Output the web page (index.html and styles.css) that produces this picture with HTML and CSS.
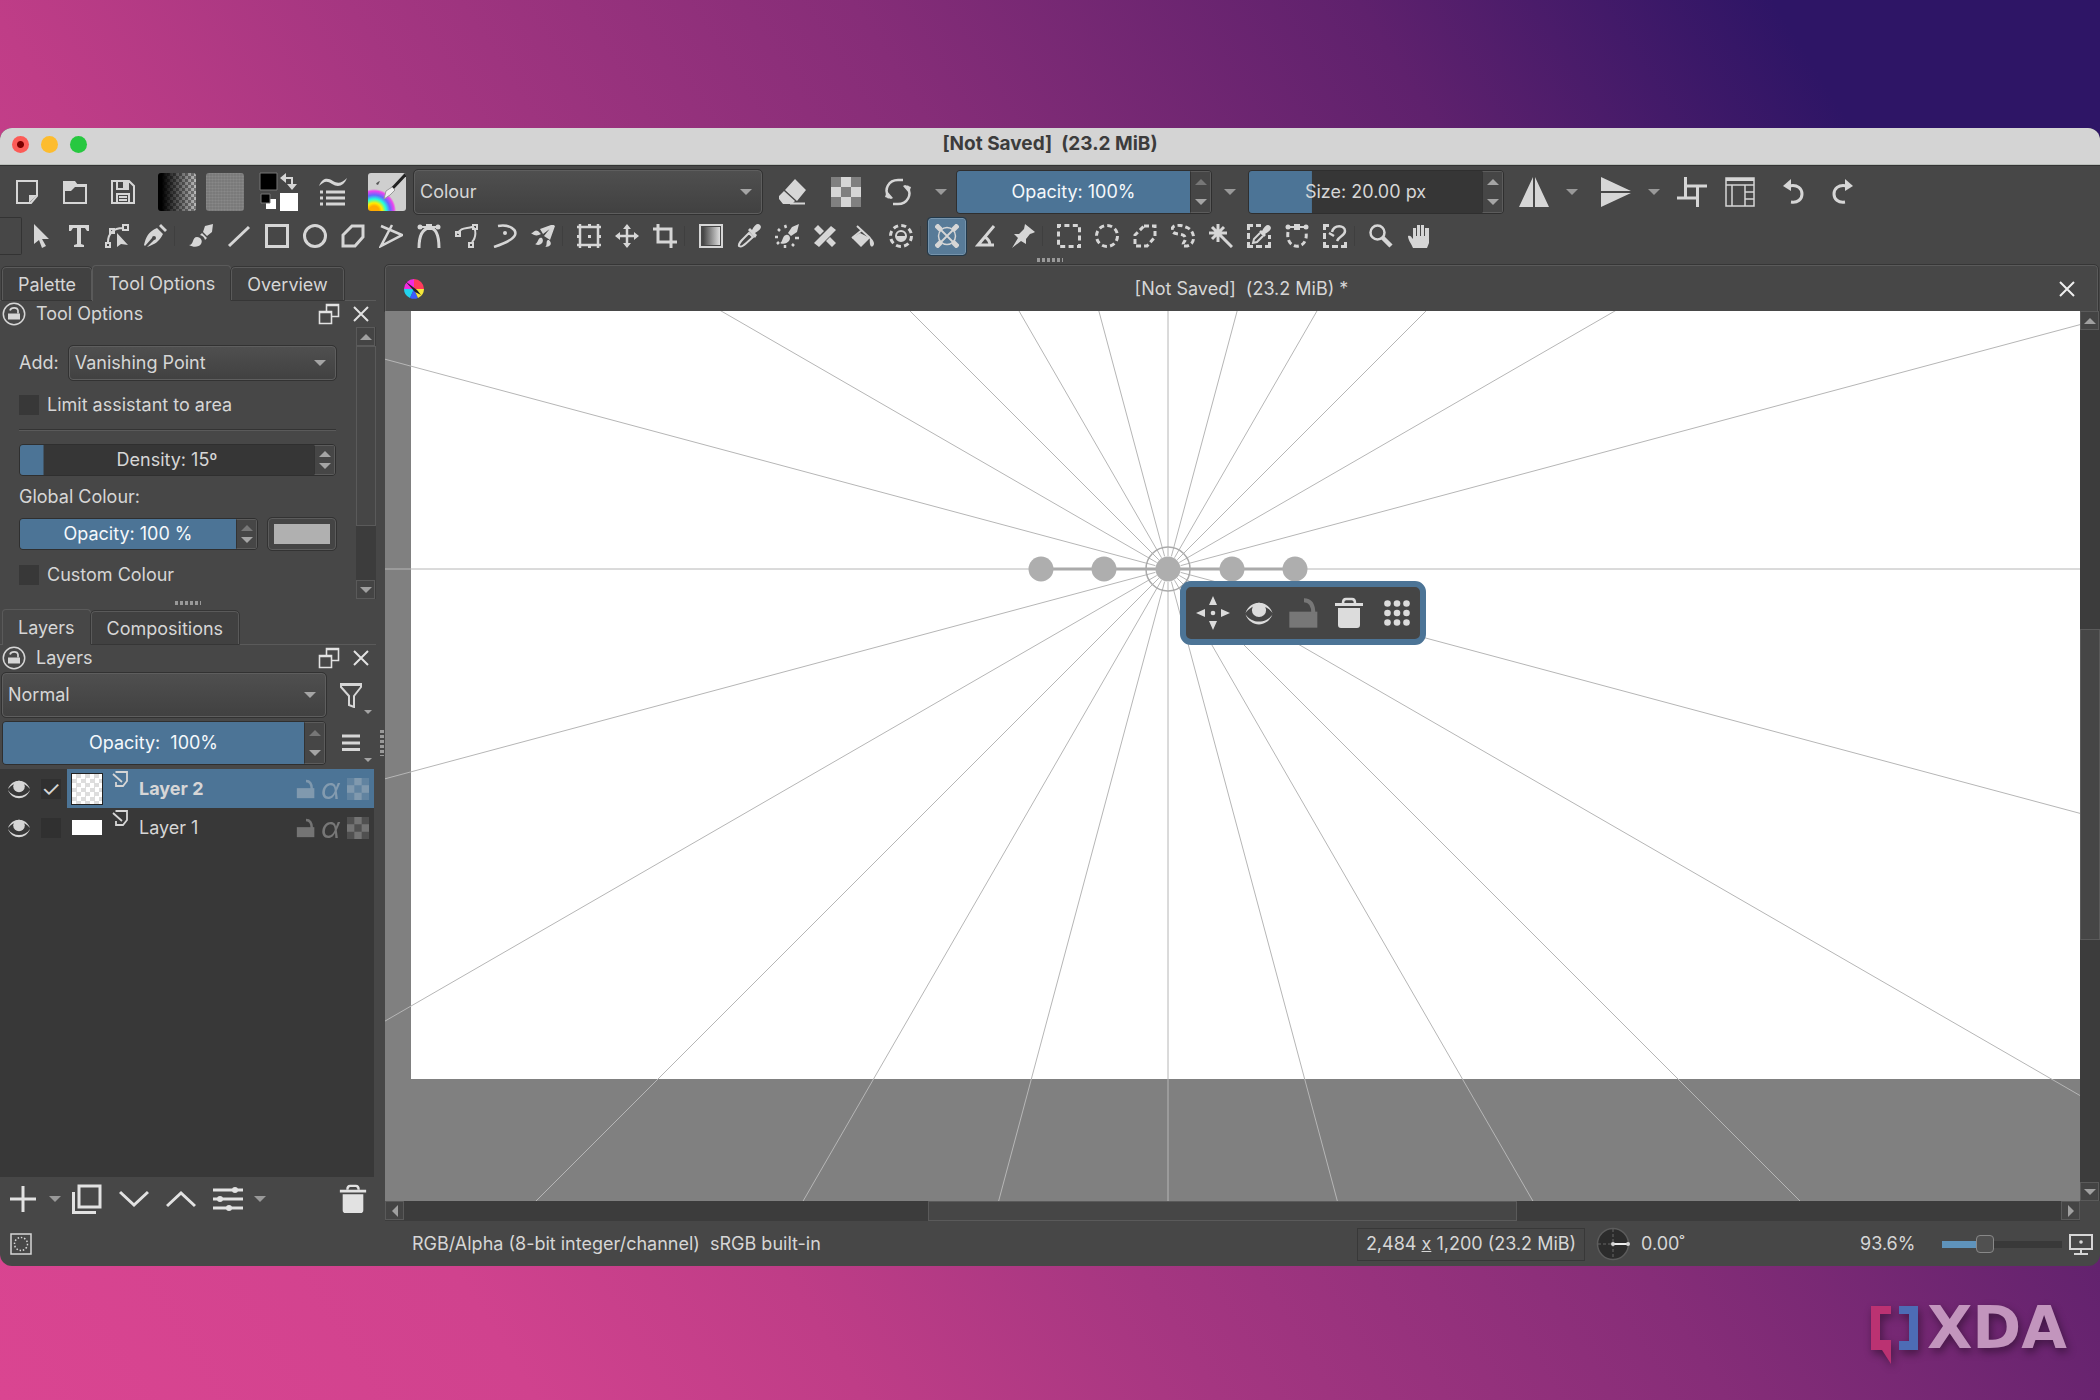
FILE: index.html
```html
<!DOCTYPE html>
<html lang="en">
<head>
    <meta charset="UTF-8">
    <meta name="viewport" content="width=device-width, initial-scale=1.0">
    <title>[Not Saved] (23.2 MiB)</title>
    <link rel="stylesheet" href="styles.css">
</head>
<body>

    <!-- Shared icons -->
    <svg class="sprite" aria-hidden="true">
        <symbol id="i-eye" viewBox="0 0 24 24">
            <path d="M1 12C5 1 19 1 23 12 20 8 16 6 12 6S4 8 1 12z"/>
            <circle cx="12" cy="9.500" r="5.800"/>
            <path d="M1 13c4 11 18 11 22 0-5 8-17 8-22 0z"/>
        </symbol>
        <symbol id="i-lock" viewBox="0 0 24 24">
            <path d="M1 11h21v12H1z"/>
            <path d="M12 2.500c5 0 7 4 7 10" fill="none" stroke="currentColor" stroke-width="3"/>
        </symbol>
        <symbol id="i-trash" viewBox="0 0 30 32">
            <path d="M1 6h28v3H1zM4 11h22v17a3 3 0 0 1-3 3H7a3 3 0 0 1-3-3z"/>
            <path d="M9 6c0-3 1-4 3-4h6c2 0 3 1 3 4" fill="none" stroke="currentColor" stroke-width="2.500"/>
        </symbol>
        <symbol id="i-checker" viewBox="0 0 30 30">
            <path d="M0 0h30v30H0z" opacity=".4"/>
            <path d="M10 0h10v10H10zM0 10h10v10H0zM20 10h10v10H20zM10 20h10v10H10z"/>
        </symbol>
        <symbol id="i-docklock" viewBox="0 0 24 24">
            <circle cx="12" cy="12" r="10.700" fill="none" stroke="currentColor" stroke-width="1.500"/>
            <path d="M6 11.500h12v6H6z"/>
            <path d="M8 8.500c1-3.500 7.500-3.500 8 0v3" fill="none" stroke="currentColor" stroke-width="1.700"/>
        </symbol>
        <symbol id="i-float" viewBox="0 0 22 22">
            <path d="M1.500 8.500h12v12h-12zM8.500 8V1.500h12v12H14M1 9.500h13M8 2.500h13" fill="none" stroke="currentColor" stroke-width="1.600"/>
        </symbol>
        <symbol id="i-close" viewBox="0 0 16 16">
            <path d="M1 1l14 14M15 1L1 15" fill="none" stroke="currentColor" stroke-width="2"/>
        </symbol>
        <symbol id="i-layertype" viewBox="0 0 18 18">
            <path d="M4.500 2H16v9l-4 5H5v-4M2 4l9 8" fill="none" stroke="currentColor" stroke-width="1.800"/>
        </symbol>
    </svg>

    <main class="window">
        <header class="titlebar">
            <div class="lights"><i class="red"></i><i class="yellow"></i><i class="green"></i></div>
            <h1>[Not Saved]&nbsp; (23.2 MiB)</h1>
        </header>

        <div class="toolbar">
            <button class="tool" aria-label="New"><svg viewBox="0 0 24 24"><path class="ln" d="M2 1h20v15l-6 7H2z"/><path d="M14 23v-8h8z"/></svg></button>
            <button class="tool" aria-label="Open"><svg viewBox="0 0 24 24"><path class="ln" d="M1 2v21h22V5H13"/><path d="M0 1h12l3 4h9v2H12l-4 4H0z"/></svg></button>
            <button class="tool" aria-label="Save"><svg viewBox="0 0 24 24"><path class="ln" d="M1 1h17l5 5v17H1zM6 1v8h11V1M6 23v-9h12v9M8 17h8M8 20h8"/><path d="M12 2h4v6h-4z"/></svg></button>
            <span class="gap"></span>
            <button class="tool" aria-label="Gradient"><span class="swatch gradient-swatch"></span></button>
            <button class="tool" aria-label="Pattern"><span class="swatch pattern-swatch"></span></button>
            <span class="gap"></span>
            <button class="tool" aria-label="Colours"><svg class="s40" viewBox="0 0 40 40">
                <path fill="#fff" d="M21 21h18v18H21zM7 27h10v10H7z"/><path fill="#000" stroke="#777" stroke-width="1" d="M1 1h17v17H1zM2 22h9v9H2z"/>
                <path class="ln" d="M25 6h8v9"/><path d="M21 6l6-5v10zM28 12h10l-5 6z"/></svg></button>
            <span class="gap"></span>
            <button class="tool" aria-label="Brush settings"><svg class="s30" viewBox="0 0 30 30"><path d="M1 9C5 0 10 1 15 4s9 2 14-3c-3 8-9 10-15 6S6 5 1 9z"/><path class="ln" d="M2 15h3M8 15h19M2 21h3M8 21h19M2 27h3M8 27h19" stroke-width="3"/></svg></button>
            <span class="gap"></span>
            <button class="tool" aria-label="Brush presets"><span class="swatch brush-swatch"><svg viewBox="0 0 38 38"><path d="M38 1L22 18" stroke="#222" stroke-width="3"/><path d="M24 14l-6 4-2 8 6-4 5-5z" fill="#eee" stroke="#999"/><path d="M8 11c1-2 2-2 4-3l-2 4z" fill="#555"/></svg></span></button>
            <div class="combo wide"><select aria-label="Brush engine"><option>Colour</option></select></div>
            <span class="gap"></span>
            <button class="tool" aria-label="Eraser mode"><svg class="s28" viewBox="0 0 28 28"><path d="M17 1l11 11-9 11L7 12zM6 13l11 10-3 3H5l-4-5v-3z"/><path class="ln" d="M12 25.500h15"/></svg></button>
            <span class="gap"></span>
            <button class="tool" aria-label="Preserve alpha"><svg class="s30"><use href="#i-checker"/></svg></button>
            <button class="tool tool-wide" aria-label="Reload preset"><svg class="s28" viewBox="0 0 28 28"><path class="ln" stroke-width="2.500" d="M5 20C-1 11 5 2 14 2h5M23 8c6 9 0 18-9 18H9"/><path d="M1 19l2-6 6 7-2 1zM27 9l-2 6-6-7 2-1z"/></svg></button>
            <button class="more" aria-label="More brush options"></button>
            <div class="spin top-spin full" style="--fill:100%"><input type="text" aria-label="Opacity" value="Opacity: 100%"><span class="steps"><button aria-label="Increase"></button><button aria-label="Decrease"></button></span></div>
            <button class="more more-wide" aria-label="Slider options"></button>
            <div class="spin top-spin" style="--fill:27%"><input type="text" aria-label="Size" value="Size: 20.00 px"><span class="steps"><button aria-label="Increase"></button><button aria-label="Decrease"></button></span></div>
            <span class="gap"></span>
            <button class="tool" aria-label="Horizontal mirror"><svg class="s30" viewBox="0 0 30 30"><path d="M14 0v30H0zM16 0v30h14z"/></svg></button>
            <button class="more" aria-label="Mirror options"></button>
            <span class="gap"></span>
            <button class="tool" aria-label="Vertical mirror"><svg class="s30" viewBox="0 0 30 30"><path d="M0 14V0l30 14zM0 16v14l30-14z"/></svg></button>
            <button class="more" aria-label="Mirror options"></button>
            <button class="tool" aria-label="Wrap around"><svg class="s30" viewBox="0 0 30 30"><path class="ln" stroke-width="3" d="M8.500 0v21M0 21h21M20.500 30V9M8 9h22"/></svg></button>
            <button class="tool" aria-label="Workspace"><svg class="s30" viewBox="0 0 30 30"><path class="ln" stroke-width="1.500" d="M1 1h28v28H1zM1 8h28M7 8v21M20 8v21M20 15h9M20 22h9"/><path d="M1 1h28v3H1z"/></svg></button>
            <span class="gap"></span>
            <button class="tool" aria-label="Undo"><svg class="s26" viewBox="0 0 26 26"><path class="ln" stroke-width="3" d="M8 7c9-2 13 3 13 8s-4 9-11 8"/><path d="M2 7l8-7v12z"/></svg></button>
            <button class="tool" aria-label="Redo"><svg class="s26" viewBox="0 0 26 26"><path class="ln" stroke-width="3" d="M18 7C9 5 5 10 5 15s4 9 11 8"/><path d="M24 7l-8-7v12z"/></svg></button>
        </div>

        <div class="toolbox">
            <span class="stub"></span>
            <button aria-label="Select shapes"><svg viewBox="0 0 24 24"><path d="M5 0v20l5-4 3 8 4-2-4-7h7z"/></svg></button>
            <button aria-label="Text"><svg viewBox="0 0 24 24"><path d="M2 1h20v6h-2l-2-3h-4v16l3 1v2H7v-2l3-1V4H6L4 7H2z"/></svg></button>
            <button aria-label="Edit shapes"><svg viewBox="0 0 24 24"><path class="ln" d="M3 18c0-8 5-14 15-14M1 19h4v4H1zM5 5h4v4H5zM18 1h5v5h-5z"/><path d="M12 9v14l4-3 7 1z"/></svg></button>
            <button aria-label="Calligraphy"><svg viewBox="0 0 24 24"><path d="M1 21C3 13 5 8 14 4l6 6c-4 8-8 10-16 13l7-7a2 2 0 1 0-2-2l-7 8zM16 2l2-2 6 6-2 2z"/></svg></button>
            <span class="sep"></span>
            <button aria-label="Freehand brush"><svg viewBox="0 0 24 24"><path d="M0 21c5 0 3-8 8-8 4 0 6 4 4 7s-7 4-12 1zM11 11l2-2 5 5-2 2c-1-3-2-4-5-5zM14 8l2-6 8-2-1 8-5 4z"/></svg></button>
            <button aria-label="Line"><svg viewBox="0 0 24 24"><path class="ln" stroke-width="3" d="M2 22L22 3"/></svg></button>
            <button aria-label="Rectangle"><svg viewBox="0 0 24 24"><path class="ln" stroke-width="3" d="M1.500 1.500h21v21h-21z"/></svg></button>
            <button aria-label="Ellipse"><svg viewBox="0 0 24 24"><circle class="ln" stroke-width="3" cx="12" cy="12" r="10.500"/></svg></button>
            <button aria-label="Polygon"><svg viewBox="0 0 24 24"><path class="ln" stroke-width="3" d="M11 2h11v11l-8 9H2V11z"/></svg></button>
            <button aria-label="Polyline"><svg viewBox="0 0 24 24"><path class="ln" stroke-width="2.500" d="M13 1L2 22l21-11L2 2"/></svg></button>
            <button aria-label="Bezier curve"><svg viewBox="0 0 24 24"><path class="ln" stroke-width="3" d="M2 24C2 10 6 5 12 4s10 6 10 20"/><path class="ln" d="M3 3h18M10 1h4v4h-4z"/><circle cx="3" cy="3" r="2.500"/><circle cx="21" cy="3" r="2.500"/></svg></button>
            <button aria-label="Freehand path"><svg viewBox="0 0 24 24"><path class="ln" d="M3 10C5 3 12 5 17 3c5 1 4 11 0 15M1 8h4v4H1zM18 1h4v4h-4zM14 19h4v4h-4z"/></svg></button>
            <button aria-label="Dynamic brush"><svg viewBox="0 0 24 24"><path class="ln" stroke-width="2.800" d="M5 2c12-2 19 4 17 9S10 20 1 23"/><circle cx="12" cy="9" r="2"/></svg></button>
            <button aria-label="Multibrush"><svg viewBox="0 0 24 24"><path d="M0 9c3 0 3-4 7-2l3 3c-3 2-7 2-10-1zM9 5l11-4 4 0-12 9zM4 20c3 0 3-8 7-6 3 4-2 9-7 6zM13 12l8-10 3 0-5 14zM14 23c3-1 0-8 4-7 4 4 1 7-4 7z"/></svg></button>
            <span class="sep"></span>
            <button aria-label="Transform"><svg viewBox="0 0 24 24"><path class="ln" stroke-width="2.500" d="M3 0v24M21 0v24M0 3h24M0 21h24"/><path d="M11 11h3v3h-3zM11 0h3v4h-3zM11 20h3v4h-3zM0 11h4v3H0zM20 11h4v3h-4z"/></svg></button>
            <button aria-label="Move"><svg viewBox="0 0 24 24"><path class="ln" stroke-width="2.500" d="M12 3v18M3 12h18"/><path d="M12 0l4 5H8zM12 24l4-5H8zM0 12l5-4v8zM24 12l-5-4v8z"/></svg></button>
            <button aria-label="Crop"><svg viewBox="0 0 24 24"><path class="ln" stroke-width="3" d="M5 0v18h19M0 5h18v19"/></svg></button>
            <span class="sep"></span>
            <button aria-label="Gradient tool"><svg viewBox="0 0 24 24"><defs><linearGradient id="g"><stop offset="0" stop-color="#444"/><stop offset="1" stop-color="#ddd"/></linearGradient></defs><path class="ln" d="M1 1h22v22H1z"/><path fill="url(#g)" d="M4 3h17v18H4z"/></svg></button>
            <button aria-label="Colour sampler"><svg viewBox="0 0 24 24"><path class="ln" d="M2 22c-1-3 3-6 10-13l4 4C8 20 5 24 2 22z"/><path d="M11 6l2-2 2 2c3-6 6-7 8-5s1 5-5 8l2 2-2 3z"/></svg></button>
            <button aria-label="Colorize mask"><svg viewBox="0 0 24 24"><path d="M5 19c3-1 2-7 6-8s5 4 3 6-5 4-9 2zM13 9l4-6 7-3-2 8-6 4z"/><path class="ln" stroke-width="2.500" d="M10 1l1 3M3 5l2 2M0 13h3M2 20l2-2M10 24v-3M19 22l-2-2M24 14h-4"/></svg></button>
            <button aria-label="Smart patch"><svg viewBox="0 0 24 24"><path d="M1 19L18 2l5 4L6 23zM1 5l4-4 6 6-4 4zM17 13l6 6-4 4-6-6z"/></svg></button>
            <button aria-label="Fill"><svg viewBox="0 0 24 24"><path d="M9 9l-8 5 9 9 9-9zM19 13c4 4 5 7 3 9s-4-1-3-9z"/><path class="ln" d="M6 2l13 12M1 14l10-8"/></svg></button>
            <button aria-label="Enclose and fill"><svg viewBox="0 0 24 24"><circle class="ln" cx="12" cy="12" r="10.500" stroke-width="3" stroke-dasharray="5 3.240"/><circle class="ln" cx="12" cy="12" r="5"/><path d="M7 12h10c0 7-10 7-10 0z"/></svg></button>
            <span class="sep"></span>
            <button class="active" aria-label="Assistants"><svg viewBox="0 0 24 24"><circle class="ln" cx="12" cy="12" r="8.500" stroke-width="1.500"/><path class="ln" stroke-width="1.800" d="M3 3l18 18M21 3L3 21"/><path class="ln" stroke-width="5" d="M1 1l5 5M23 1l-5 5M1 23l5-5M23 23l-5-5"/></svg></button>
            <button aria-label="Measure"><svg viewBox="0 0 24 24"><path class="ln" stroke-width="3" d="M21 2L5 21h16M12 13c3 2 5 4 5 8"/></svg></button>
            <button aria-label="Reference images"><svg viewBox="0 0 24 24"><path d="M14 0l10 8-2 1-3 1-4 5v5L10 17 1 24l6-10-4-4h5l5-5z"/></svg></button>
            <span class="sep"></span>
            <button aria-label="Rectangular selection"><svg viewBox="0 0 24 24"><path class="ln" stroke-width="3" stroke-dasharray="5 3.400" stroke-dashoffset="2.500" d="M1.500 1.500h21v21h-21z"/></svg></button>
            <button aria-label="Elliptical selection"><svg viewBox="0 0 24 24"><circle class="ln" stroke-width="3" stroke-dasharray="5 3.240" cx="12" cy="12" r="10.500"/></svg></button>
            <button aria-label="Polygonal selection"><svg viewBox="0 0 24 24"><path class="ln" stroke-width="3" stroke-dasharray="5 3" d="M11 2h11v11l-8 9H2V11z"/></svg></button>
            <button aria-label="Freehand selection"><svg viewBox="0 0 24 24"><path class="ln" stroke-width="3" stroke-dasharray="5 3" d="M13 22c12 1 12-14 4-18S1 0 1 6s11 2 13 7-4 5-1 9z"/></svg></button>
            <button aria-label="Contiguous selection"><svg viewBox="0 0 24 24"><path class="ln" stroke-width="3" d="M9 9l14 14M9 0v18M0 9h18M3 3l12 12M15 3L3 15"/></svg></button>
            <button aria-label="Similar colour selection"><svg viewBox="0 0 24 24"><path class="ln" stroke-width="3" d="M1.500 6V1.500H6M9 1.500h5M1.500 9v6M1.500 18v4.500H6M9 22.500h6M18 22.500h4.500V18M22.500 15v-4"/><path d="M12 8l2-2 1 1c3-6 6-7 8-5s1 5-5 8l1 1-2 2z"/><path class="ln" d="M13 9l-6 6-1 4 4-1 6-6"/></svg></button>
            <button aria-label="Bezier selection"><svg viewBox="0 0 24 24"><path class="ln" stroke-width="3" stroke-dasharray="5 3" d="M3 8c-3 19 21 19 18 0"/><path class="ln" d="M2 3h20M10 1h4v4h-4z"/><circle cx="3" cy="3" r="2.500"/><circle cx="21" cy="3" r="2.500"/></svg></button>
            <button aria-label="Magnetic selection"><svg viewBox="0 0 24 24"><path class="ln" stroke-width="3" d="M1.500 6V1.500H6M1.500 9v6M1.500 18v4.500H6M9 22.500h6M18 22.500h4.500V18"/><path class="ln" stroke-width="2.500" d="M9 8c2-8 13-7 13-1 0 5-6 5-8 10M6 9l5 3"/></svg></button>
            <span class="sep"></span>
            <button aria-label="Zoom"><svg viewBox="0 0 24 24"><circle class="ln" stroke-width="2.500" cx="8.500" cy="8.500" r="7"/><path class="ln" stroke-width="4.500" d="M13.500 13.500L22 22"/></svg></button>
            <button aria-label="Pan"><svg viewBox="0 0 24 24"><path d="M6 24C4 19 1 16 1 12c2-1 3 0 5 3V4h3v8h1V1h3v11h1V1h3v11h1V4h4v15l-2 5z"/></svg></button>
        </div>

        <div class="grip"></div>

        <div class="workspace">
            <aside class="sidebar">
                <section class="dock">
                    <nav class="tabs">
                        <button>Palette</button><button class="current">Tool Options</button><button>Overview</button>
                    </nav>
                    <div class="dock-title">
                        <svg><use href="#i-docklock"/></svg>
                        <h2>Tool Options</h2>
                        <button aria-label="Float docker"><svg class="s22"><use href="#i-float"/></svg></button>
                        <button aria-label="Close docker"><svg class="s16"><use href="#i-close"/></svg></button>
                    </div>
                    <div class="scroll-area">
                        <form class="options">
                            <div class="field"><label for="add">Add:</label><div class="combo"><select id="add"><option>Vanishing Point</option></select></div></div>
                            <label class="check"><input type="checkbox">Limit assistant to area</label>
                            <hr>
                            <div class="spin" style="--fill:8%"><input type="text" aria-label="Density" value="Density: 15º"><span class="steps"><button type="button" aria-label="Increase"></button><button type="button" aria-label="Decrease"></button></span></div>
                            <p>Global Colour:</p>
                            <div class="field colour-row">
                                <div class="spin full" style="--fill:100%"><input type="text" aria-label="Global opacity" value="Opacity: 100 %"><span class="steps"><button type="button" aria-label="Increase"></button><button type="button" aria-label="Decrease"></button></span></div>
                                <button type="button" class="colour" aria-label="Global colour"></button>
                            </div>
                            <label class="check"><input type="checkbox">Custom Colour</label>
                        </form>
                        <div class="vbar"><button class="up" aria-label="Scroll up"></button><span class="track"><i></i></span><button class="down" aria-label="Scroll down"></button></div>
                    </div>
                </section>

                <div class="grip"></div>

                <section class="dock layers-dock">
                    <nav class="tabs">
                        <button class="current">Layers</button><button>Compositions</button>
                    </nav>
                    <div class="dock-title">
                        <svg><use href="#i-docklock"/></svg>
                        <h2>Layers</h2>
                        <button aria-label="Float docker"><svg class="s22"><use href="#i-float"/></svg></button>
                        <button aria-label="Close docker"><svg class="s16"><use href="#i-close"/></svg></button>
                    </div>
                    <div class="layer-row">
                        <div class="combo tall"><select aria-label="Blending mode"><option>Normal</option></select></div>
                        <button class="corner" aria-label="Filter layers"><svg class="s26" viewBox="0 0 26 26"><path class="ln" d="M3 2h20v3l-7 9v11l-5-2v-9L3 5z"/><path d="M3 1h20v3H3z"/></svg></button>
                    </div>
                    <div class="layer-row">
                        <div class="spin tall full" style="--fill:100%"><input type="text" aria-label="Layer opacity" value="Opacity:&nbsp; 100%"><span class="steps"><button aria-label="Increase"></button><button aria-label="Decrease"></button></span></div>
                        <button class="corner" aria-label="Layer list options"><svg class="s26" viewBox="0 0 26 26"><path class="ln" stroke-width="3" d="M4 6h18M4 13h18M4 19.500h18"/></svg></button>
                    </div>
                    <ul class="layers">
                        <li class="selected">
                            <svg><use href="#i-eye"/></svg>
                            <input type="checkbox" aria-label="Select Layer 2" checked>
                            <div class="layer"><span class="thumb alpha"></span><svg class="s18 kind"><use href="#i-layertype"/></svg><span class="name">Layer 2</span>
                            <svg class="s20 dim"><use href="#i-lock"/></svg><em>α</em><svg class="s22 dim"><use href="#i-checker"/></svg></div>
                        </li>
                        <li>
                            <svg><use href="#i-eye"/></svg>
                            <input type="checkbox" aria-label="Select Layer 1">
                            <div class="layer"><span class="thumb"></span><svg class="s18 kind"><use href="#i-layertype"/></svg><span class="name">Layer 1</span>
                            <svg class="s20 dim"><use href="#i-lock"/></svg><em>α</em><svg class="s22 dim"><use href="#i-checker"/></svg></div>
                        </li>
                    </ul>
                    <div class="layer-tools">
                        <button aria-label="Add layer"><svg class="s30" viewBox="0 0 30 30"><path class="ln" stroke-width="3" d="M15 2v26M2 15h26"/></svg></button>
                        <button class="more" aria-label="Add layer options"></button>
                        <button aria-label="Duplicate layer"><svg class="s30" viewBox="0 0 30 30"><path class="ln" stroke-width="3" d="M7 2h21v21H7zM1.500 8v20.500H24"/></svg></button>
                        <button aria-label="Move layer down"><svg class="s30" viewBox="0 0 30 30"><path class="ln" stroke-width="3" d="M1 8l14 13L29 8"/></svg></button>
                        <button aria-label="Move layer up"><svg class="s30" viewBox="0 0 30 30"><path class="ln" stroke-width="3" d="M1 22L15 9l14 13"/></svg></button>
                        <button aria-label="Layer properties"><svg class="s30" viewBox="0 0 30 30"><path class="ln" stroke-width="3" d="M0 6h30M0 15h30M0 24h30"/><circle cx="22" cy="6" r="3"/><circle cx="7" cy="15" r="3"/><circle cx="16" cy="24" r="3"/></svg></button>
                        <button class="more" aria-label="Properties options"></button>
                        <span class="spacer"></span>
                        <button aria-label="Delete layer"><svg class="s30"><use href="#i-trash"/></svg></button>
                    </div>
                </section>
            </aside>

            <div class="vgrip"></div>

            <section class="document">
                <div class="doc-tab">
                    <svg class="s20" viewBox="0 0 20 20"><path fill="#22d3ee" d="M10 10L0 10a10 10 0 0 0 6 9z"/><path fill="#3b5bfd" d="M10 10l-4 9a10 10 0 0 0 8 0z"/><path fill="#f5e83a" d="M10 10l4 9a10 10 0 0 0 6-9z"/><path fill="#ff3b5c" d="M10 10h10A10 10 0 0 0 10 0z"/><path fill="#f02be0" d="M10 10V0A10 10 0 0 0 0 10z"/><path d="M1 2l12 9 4 5-6-3z" fill="#222"/></svg>
                    <h2>[Not Saved]&nbsp; (23.2 MiB) *</h2>
                    <button aria-label="Close document"><svg class="s16"><use href="#i-close"/></svg></button>
                </div>
                <div class="view">
                    <div class="canvas">
                        <svg class="drawing" viewBox="0 0 1695 890" preserveAspectRatio="xMinYMin slice">
                            <path fill="#fff" d="M26 0h1669v768H26z"/>
                            <g id="rays" stroke="#b6b6b6" stroke-width="1"></g>
                            <circle cx="783" cy="258" r="22" fill="none" stroke="#aaa" stroke-width="1.500"/>
                            <path d="M656 258h254" stroke="#aaa" stroke-width="3"/>
                            <g fill="#aeaeae"><circle cx="656" cy="258" r="12.500"/><circle cx="719" cy="258" r="12.500"/><circle cx="783" cy="258" r="12.500"/><circle cx="847" cy="258" r="12.500"/><circle cx="910" cy="258" r="12.500"/></g>
                        </svg>
                        <div class="assistant-bar">
                            <button aria-label="Move"><svg class="s34" viewBox="0 0 34 34"><path d="M17 0l4 9h-8zM17 34l4-9h-8zM0 17l9-4v8zM34 17l-9-4v8z"/><circle cx="17" cy="17" r="2.300"/></svg></button>
                            <button aria-label="Toggle visibility"><svg class="s32" viewBox="-1 -1 26 26"><use href="#i-eye" width="24" height="24"/></svg></button>
                            <button class="faded" aria-label="Lock"><svg class="s32"><use href="#i-lock"/></svg></button>
                            <button aria-label="Delete"><svg class="s32"><use href="#i-trash"/></svg></button>
                            <span class="spacer"></span>
                            <button aria-label="Drag handle"><svg class="s26" viewBox="0 0 26 26"><circle cx="3.500" cy="3.500" r="3.300"/><circle cx="13" cy="3.500" r="3.300"/><circle cx="22.500" cy="3.500" r="3.300"/><circle cx="3.500" cy="13" r="3.300"/><circle cx="13" cy="13" r="3.300"/><circle cx="22.500" cy="13" r="3.300"/><circle cx="3.500" cy="22.500" r="3.300"/><circle cx="13" cy="22.500" r="3.300"/><circle cx="22.500" cy="22.500" r="3.300"/></svg></button>
                        </div>
                    </div>
                    <div class="vbar"><button class="up" aria-label="Scroll up"></button><span class="track"><i></i></span><button class="down" aria-label="Scroll down"></button></div>
                    <div class="hbar"><button class="left" aria-label="Scroll left"></button><span class="track"><i></i></span><button class="right" aria-label="Scroll right"></button></div>
                </div>
            </section>
        </div>

        <footer class="status">
            <button aria-label="Selection display"><svg class="s22" viewBox="0 0 22 22"><path class="ln" stroke-width="1.500" d="M1 1h20v20H1z"/><circle class="ln" stroke-width="1.500" stroke-dasharray="1.500 1.800" cx="11" cy="11" r="6.500"/></svg></button>
            <span class="profile">RGB/Alpha (8-bit integer/channel)&nbsp; sRGB built-in</span>
            <button class="size">2,484 <u>x</u> 1,200 (23.2 MiB)</button>
            <svg class="s34 dial" viewBox="0 0 34 34"><circle cx="17" cy="17" r="15.500" fill="#2c2c2c" stroke="#5c5c5c" stroke-width="1.500"/><path d="M17 2v30M2 17h15" stroke="#666" stroke-dasharray="3 2"/><path d="M17 17h15" stroke="#eee" stroke-width="2"/><circle cx="17" cy="17" r="2"/><circle cx="32" cy="17" r="2"/></svg>
            <span class="angle">0.00˚</span>
            <label class="percent" for="zoom">93.6%</label>
            <input type="range" id="zoom" min="0" max="100" value="33">
            <button aria-label="Fit to screen"><svg viewBox="0 0 24 24"><path class="ln" d="M1 3h22v14H1zM12 17v5M5 22h14"/><circle cx="12" cy="10" r="1.800"/></svg></button>
        </footer>
    </main>

    <div class="brand">
        <svg viewBox="0 0 50 60"><path fill="#bb3272" d="M0 0h20v8H9v26h11v24l-9-14H0z"/><path fill="#4d6cb5" d="M28 0h19v44H28v-9h10V8H28z"/></svg>
        <span>XDA</span>
    </div>

    <script>
        // one ray every 15 degrees from the vanishing point
        const rays = document.getElementById('rays');
        for (let a = 0; a < 360; a += 15) {
            const line = document.createElementNS('http://www.w3.org/2000/svg', 'line');
            const rad = a * Math.PI / 180;
            line.setAttribute('x1', 783 + 13 * Math.cos(rad));
            line.setAttribute('y1', 258 + 13 * Math.sin(rad));
            line.setAttribute('x2', 783 + 2000 * Math.cos(rad));
            line.setAttribute('y2', 258 + 2000 * Math.sin(rad));
            rays.appendChild(line);
        }
    </script>

</body>
</html>
```
FILE: styles.css
```css
* {
    box-sizing: border-box;
}
body {
    margin: 0;
    min-height: 100vh;
    display: flex;
    flex-direction: column;
    padding-top: 128px;
    font-family: Inter, "Liberation Sans", sans-serif;
    font-size: 18px;
    line-height: 24px;
    color: #d6d6d6;
    background: linear-gradient(58deg, #da4591 0%, #d0428e 18%, #bf3d87 29%, #a53681 41%, #862d78 58%, #5f216d 75%, #2e1566 89%);
}
h1, h2, p, ul {
    margin: 0;
    padding: 0;
}
button, input, select {
    font: inherit;
    color: inherit;
    margin: 0;
    padding: 0;
    border: 0;
    background: none;
}
button {
    display: flex;
    align-items: center;
    justify-content: center;
    flex-shrink: 0;
}
svg {
    display: block;
    flex-shrink: 0;
    width: 24px;
    height: 24px;
    fill: currentColor;
}
svg .ln {
    fill: none;
    stroke: currentColor;
    stroke-width: 2;
}
svg .ln[stroke-width="1.500"] { stroke-width: 1.5; }
svg .ln[stroke-width="1.800"] { stroke-width: 1.8; }
svg .ln[stroke-width^="2."] { stroke-width: 2.5; }
svg .ln[stroke-width^="3"] { stroke-width: 3; }
svg .ln[stroke-width^="4"] { stroke-width: 4.5; }
svg .ln[stroke-width="5"] { stroke-width: 5; }
svg.sprite {
    position: absolute;
    width: 0;
    height: 0;
}
.s16 { width: 16px; height: 16px; }
.s18 { width: 18px; height: 18px; }
.s20 { width: 20px; height: 20px; }
.s22 { width: 22px; height: 22px; }
.s26 { width: 26px; height: 26px; }
.s28 { width: 28px; height: 28px; }
.s30 { width: 30px; height: 30px; }
.s32 { width: 32px; height: 32px; }
.s34 { width: 34px; height: 34px; }
.s40 { width: 40px; height: 40px; }
.spacer { flex: 1; }

.window {
    flex: 1;
    display: flex;
    flex-direction: column;
    overflow: hidden;
    border-radius: 12px;
    background: #474747;
}

/* Title bar */
.titlebar {
    display: grid;
    grid-template-columns: 1fr auto 1fr;
    align-items: center;
    height: 37px;
    padding: 0 12px 4px;
    background: #d4d4d4;
    border-bottom: 1px solid #b9bdb9;
}
.titlebar h1 {
    font-size: 19px;
    font-weight: 700;
    color: #3c3c3c;
}
.lights {
    display: flex;
    gap: 12px;
}
.lights i {
    width: 17px;
    height: 17px;
    border-radius: 50%;
}
.red { background: radial-gradient(#7a0000 0 3px, #fc5b57 4px); }
.yellow { background: #fdbc2e; }
.green { background: #27c840; }

/* Toolbars */
.toolbar {
    display: flex;
    align-items: center;
    height: 51px;
    padding: 1px 0 0 3px;
    border-top: 1px solid #333;
}
.tool {
    width: 48px;
    height: 48px;
}
.tool-wide {
    width: 56px;
}
.gap {
    width: 6px;
}
.swatch {
    width: 38px;
    height: 38px;
    border-radius: 3px;
    overflow: hidden;
}
.swatch svg {
    width: 38px;
    height: 38px;
}
.gradient-swatch {
    background: linear-gradient(90deg, #000 10%, transparent), repeating-conic-gradient(#777 0 25%, #bbb 0 50%) 0 0 / 6px 6px;
}
.pattern-swatch {
    background: repeating-linear-gradient(90deg, #8885 0 1px, #7775 1px 3px), repeating-linear-gradient(#888 0 1px, #7c7c7c 1px 3px);
}
.brush-swatch {
    background: radial-gradient(circle at 16% 100%, #fa0 0 5px, #fe0 8px, #2fd 12px, #66f 16px, #e4e 20px, transparent 22px), #cfcfcf;
}
.more {
    width: 28px;
    height: 28px;
}
.more-wide {
    width: 36px;
}
.more::after {
    content: "";
    border: 6px solid transparent;
    border-top-color: #999;
    border-bottom: 0;
}
.tool-wide + .more {
    width: 30px;
}

.combo {
    position: relative;
    flex: 1;
    height: 34px;
}
.combo select {
    appearance: none;
    width: 100%;
    height: 100%;
    padding: 0 30px 0 5px;
    border: 1px solid #5e5e5e;
    border-radius: 4px;
    outline: 1px solid #323232;
    background: linear-gradient(#4f4f4f, #414141);
}
.combo::after {
    content: "";
    position: absolute;
    right: 10px;
    top: calc(50% - 3px);
    border: 6px solid transparent;
    border-top-color: #a5a5a5;
    border-bottom: 0;
    pointer-events: none;
}
.combo.wide {
    flex: none;
    width: 348px;
    height: 44px;
    margin-left: 3px;
}
.combo.tall, .spin.tall {
    height: 44px;
}

.spin {
    display: flex;
    height: 32px;
    border: 1px solid #2f2f2f;
    border-radius: 4px;
    background: #363636;
    overflow: hidden;
}
.spin input {
    flex: 1;
    min-width: 0;
    text-align: center;
    background: linear-gradient(#4c7496, #4c7496) no-repeat 0 0 / var(--fill) 100%;
}
.spin.full input {
    color: #f4f8fb;
}
.steps {
    display: flex;
    flex-direction: column;
    justify-content: center;
    width: 21px;
    border: 1px solid #5c5c5c;
    border-left-color: #333;
    background: #464646;
}
.steps button {
    height: 12px;
}
.top-spin .steps button, .tall .steps button {
    height: 20px;
}
.steps button::after {
    content: "";
    border: 6px solid transparent;
    border-top-color: #a5a5a5;
    border-bottom: 0;
}
.steps button:first-child::after {
    border: 6px solid transparent;
    border-bottom-color: #a5a5a5;
    border-top: 0;
}
.full .steps button:first-child::after {
    border-bottom-color: #777;
}
.top-spin {
    width: 256px;
    height: 44px;
}

.toolbox {
    display: flex;
    align-items: center;
    height: 40px;
}
.toolbox button {
    width: 38px;
    height: 37px;
}
.toolbox .active {
    border: 1px solid #7593ab;
    outline: 1px solid #22394b;
    border-radius: 3px;
    background: #587b98;
}
.stub {
    width: 22px;
    height: 38px;
    border: 1px solid #333;
    border-left: 0;
    border-radius: 0 2px 2px 0;
}
.sep {
    width: 8px;
    height: 20px;
    border-left: 1px solid #3f3f3f;
}
.grip {
    width: 26px;
    height: 4px;
    margin: 2px auto 3px;
    background: repeating-linear-gradient(90deg, #999 0 3px, transparent 3px 5px);
}
.vgrip {
    align-self: center;
    width: 4px;
    height: 26px;
    margin: 0 1px 0 4px;
    background: repeating-linear-gradient(#999 0 3px, transparent 3px 5px);
}

/* Dockers */
.workspace {
    flex: 1;
    display: flex;
}
.sidebar {
    display: flex;
    flex-direction: column;
    width: 376px;
}
.sidebar .grip {
    margin: 2px auto 4px;
}
.layers-dock {
    flex: 1;
    display: flex;
    flex-direction: column;
}
.tabs {
    display: flex;
    align-items: flex-end;
    height: 36px;
    padding-left: 2px;
    border-bottom: 1px solid #5a5a5a;
}
.tabs button {
    height: 33px;
    padding: 2px 15px 0;
    border: 1px solid #5a5a5a;
    border-bottom: 0;
    border-radius: 4px 4px 0 0;
    outline: 1px solid #363636;
    background: #414141;
}
.tabs .current {
    height: 36px;
    padding-top: 0;
    outline: 0;
    margin-bottom: -1px;
    background: #474747;
}
.dock-title {
    display: flex;
    align-items: center;
    gap: 10px;
    height: 26px;
    padding: 0 7px 0 2px;
}
.dock-title h2 {
    flex: 1;
    font-size: 18px;
    font-weight: 400;
}
.dock-title button {
    color: #e2e2e2;
}
.dock-title button:last-child {
    margin-left: 3px;
}
.scroll-area {
    display: flex;
    height: 272px;
}
.options {
    flex: 1;
    display: flex;
    flex-direction: column;
    padding: 19px 20px 0 19px;
}
.field {
    display: flex;
    align-items: center;
    gap: 10px;
}
.check {
    display: flex;
    align-items: center;
    gap: 8px;
    margin-top: 13px;
}
input[type="checkbox"] {
    appearance: none;
    width: 20px;
    height: 20px;
    background: #383838;
}
hr {
    width: 100%;
    margin: 12px 0 13px;
    border: 0;
    border-top: 1px solid #333;
    border-bottom: 1px solid #5a5a5a;
}
.options p {
    margin: 9px 0;
}
.colour-row .spin {
    width: 239px;
}
.colour {
    width: 68px;
    height: 32px;
    padding: 5px;
    border: 1px solid #5c5c5c;
    border-radius: 4px;
    outline: 1px solid #333;
    background: linear-gradient(#b0b0b0, #b0b0b0) content-box, #444;
}

/* Scroll bars */
.vbar, .hbar {
    display: flex;
    background: #3c3c3c;
}
.vbar {
    flex-direction: column;
    width: 20px;
}
.vbar button, .hbar button {
    width: 19px;
    height: 19px;
    border: 1px solid #5a5a5a;
    background: #444;
}
.vbar button::after, .hbar button::after {
    content: "";
    border: 6px solid transparent;
}
.up::after { border-bottom-color: #a0a0a0 !important; border-top: 0 !important; }
.down::after { border-top-color: #a0a0a0 !important; border-bottom: 0 !important; }
.left::after { border-right-color: #a0a0a0 !important; border-left: 0 !important; }
.right::after { border-left-color: #a0a0a0 !important; border-right: 0 !important; }
.track {
    flex: 1;
    display: flex;
}
.track i {
    flex: 1;
    border: 1px solid #5a5a5a;
    background: #464646;
}
.scroll-area .track i {
    height: 77%;
}
.view .vbar .track i {
    height: 311px;
    margin-top: 299px;
}
.hbar .track {
    justify-content: center;
    padding-right: 20px;
}
.hbar .track i {
    flex: 0 0 36%;
}

/* Layers */
.layer-row {
    display: flex;
    height: 48px;
    align-items: center;
    padding-left: 2px;
}
.layer-row .combo, .layer-row .spin {
    flex: 1;
}
.corner {
    position: relative;
    width: 50px;
    height: 44px;
}
.corner::after {
    content: "";
    position: absolute;
    right: 4px;
    bottom: 3px;
    border: 4px solid transparent;
    border-top-color: #a5a5a5;
    border-bottom: 0;
}
.layers {
    flex: 1;
    margin: 2px 2px 0 0;
    list-style: none;
    background: #383838;
}
.layers li {
    display: flex;
    align-items: center;
    height: 39px;
    padding-left: 7px;
    gap: 10px;
}
.layers li input {
    background: #303030;
}
.layers li input:checked::after {
    content: "✓";
    display: block;
    font-size: 22px;
    line-height: 20px;
    text-align: center;
}
.layer {
    flex: 1;
    display: flex;
    align-items: center;
    height: 39px;
    margin-left: -4px;
    padding: 0 5px;
}
.selected .layer {
    background: #4c7496;
    font-weight: 700;
}
.thumb {
    width: 30px;
    height: 15px;
    background: #fff;
}
.thumb.alpha {
    height: 30px;
    outline: 1px solid #222;
    background: repeating-conic-gradient(#ddd 0 25%, #fff 0 50%) 0 0 / 9px 9px;
}
.kind {
    align-self: flex-start;
    margin: 1px 10px 0 9px;
}
.name {
    flex: 1;
}
.layer em {
    width: 20px;
    margin: 0 6px 0 5px;
    font-size: 29px;
    font-weight: 400;
    opacity: .4;
}
.dim {
    opacity: .38;
}
.layer-tools {
    display: flex;
    align-items: center;
    height: 44px;
    padding: 0 8px;
    color: #e2e2e2;
}
.layer-tools button + button:not(.more) {
    margin-left: 17px;
}
.layer-tools .more {
    margin: 0 -13px 0 3px;
}
.layer-tools .more + button:not(.more) {
    margin-left: 16px;
}

/* Document */
.document {
    flex: 1;
    display: flex;
    flex-direction: column;
    min-width: 0;
}
.doc-tab {
    display: flex;
    align-items: center;
    height: 46px;
    margin-right: 2px;
    padding: 0 22px 0 18px;
    border: 1px solid #5a5a5a;
    border-bottom: 0;
    border-radius: 4px 4px 0 0;
    outline: 1px solid #363636;
}
.doc-tab h2 {
    flex: 1;
    text-align: center;
    font-size: 18px;
    font-weight: 400;
}
.doc-tab button {
    color: #eee;
}
.view {
    flex: 1;
    display: grid;
    grid-template: minmax(0, 1fr) 20px / minmax(0, 1fr) 20px;
}
.canvas {
    position: relative;
    overflow: hidden;
    background: #808080;
}
.drawing {
    position: absolute;
    width: 100%;
    height: 100%;
}
.assistant-bar {
    position: absolute;
    left: 795px;
    top: 270px;
    display: flex;
    align-items: center;
    gap: 13px;
    width: 246px;
    height: 64px;
    padding: 0 10px;
    border: 6px solid #4c7496;
    border-radius: 11px;
    background: #454545;
    color: #dcdcdc;
}
.assistant-bar .spacer {
    margin-left: -13px;
}
.faded {
    color: #777;
}

/* Status bar */
.status {
    display: flex;
    align-items: center;
    height: 45px;
    padding: 1px 7px 0 10px;
}
.profile {
    flex: 1;
    padding-left: 380px;
}
.size {
    min-width: 228px;
    height: 33px;
    border: 1px solid #383838;
    white-space: pre;
}
.dial {
    margin: 0 11px;
}
.angle {
    width: 219px;
}
.percent {
    width: 82px;
}
#zoom {
    appearance: none;
    width: 120px;
    height: 30px;
    margin-right: 7px;
    background: linear-gradient(90deg, #5f93bb 33%, #393939 33%) no-repeat center / 100% 7px;
}
#zoom::-webkit-slider-thumb {
    appearance: none;
    width: 18px;
    height: 18px;
    border: 1px solid #888;
    border-radius: 4px;
    background: #505050;
}

.brand {
    display: flex;
    align-items: flex-start;
    justify-content: flex-end;
    gap: 6px;
    height: 134px;
    padding: 40px 33px 0 0;
    color: #c295bd;
    filter: drop-shadow(2px 4px 4px #0006);
}
.brand svg {
    width: 50px;
    height: 60px;
}
.brand span {
    font-family: "DejaVu Sans", sans-serif;
    font-size: 59px;
    line-height: 44px;
    font-weight: 700;
}
```
